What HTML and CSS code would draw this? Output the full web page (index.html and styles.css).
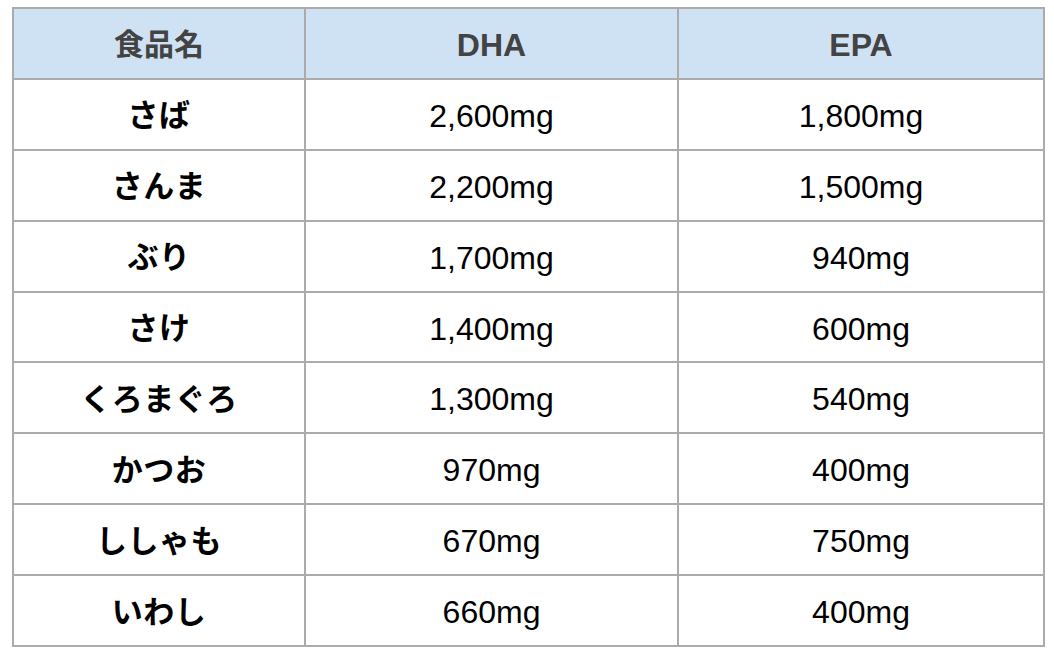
FILE: index.html
```html
<!DOCTYPE html>
<html lang="ja">
<head>
<meta charset="utf-8">
<link rel="stylesheet" href="styles.css">
</head>
<body>
<table class="fish-table">
  <colgroup>
    <col class="col-name">
    <col class="col-dha">
    <col class="col-epa">
  </colgroup>
  <thead>
    <tr><th class="name">食品名</th><th>DHA</th><th>EPA</th></tr>
  </thead>
  <tbody>
    <tr><td class="name">さば</td><td>2,600mg</td><td>1,800mg</td></tr>
    <tr><td class="name">さんま</td><td>2,200mg</td><td>1,500mg</td></tr>
    <tr><td class="name">ぶり</td><td>1,700mg</td><td>940mg</td></tr>
    <tr><td class="name">さけ</td><td>1,400mg</td><td>600mg</td></tr>
    <tr><td class="name">くろまぐろ</td><td>1,300mg</td><td>540mg</td></tr>
    <tr><td class="name">かつお</td><td>970mg</td><td>400mg</td></tr>
    <tr><td class="name">ししゃも</td><td>670mg</td><td>750mg</td></tr>
    <tr><td class="name">いわし</td><td>660mg</td><td>400mg</td></tr>
  </tbody>
</table>
</body>
</html>
```
FILE: styles.css
```css
html, body {
  margin: 0;
  padding: 0;
  background: #ffffff;
}
body {
  padding: 7px 0 0 12px;
  font-family: "Liberation Sans", "Noto Sans CJK JP", Arial, sans-serif;
}
.fish-table {
  border-collapse: collapse;
  width: 1031px;
  table-layout: fixed;
  font-size: 32px;
  color: #000000;
}
.col-name { width: 292px; }
.col-dha { width: 373px; }
.col-epa { width: 366px; }
.fish-table th,
.fish-table td {
  border: 2px solid #ababab;
  height: 65.9px;
  padding: 3px 0 0;
  text-align: center;
  vertical-align: middle;
  line-height: 1;
}
.fish-table th {
  background: #cfe2f3;
  color: #434343;
  font-weight: bold;
}
.fish-table th.name {
  font-size: 30px;
}
.fish-table td.name {
  font-weight: bold;
  font-size: 31px;
  letter-spacing: 0.5px;
}
```
